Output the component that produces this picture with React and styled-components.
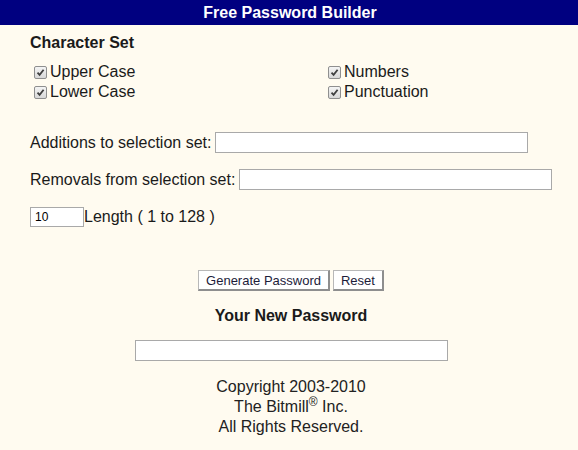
import React from 'react'
import styled, { createGlobalStyle } from 'styled-components'

const GlobalStyle = createGlobalStyle`
  body {
    margin: 0;
    background-color: #fffbf0;
    font-family: "Liberation Sans", Arial, sans-serif;
    color: #1a1a1a;
  }
`

const Header = styled.div`
  height: 25px;
  background-color: #000080;
  color: #fff;
  font-weight: bold;
  font-size: 16px;
  display: flex;
  align-items: center;
  justify-content: center;
  padding-left: 2px;
`

const Body = styled.div`
  padding: 0 0 0 30px;
  font-size: 16px;
`

const SectionTitle = styled.div`
  font-weight: bold;
  margin-top: 8px;
  height: 19px;
  line-height: 19px;
`

const CheckGrid = styled.div`
  display: grid;
  grid-template-columns: 294px 1fr;
  margin-top: 10px;
  padding-left: 4px;
`

const CheckItem = styled.label`
  display: flex;
  align-items: center;
  height: 20px;
`

const Box = styled.span`
  width: 11px;
  height: 11px;
  border: 1px solid #8f8f8f;
  border-radius: 2px;
  background: linear-gradient(#f4f4f4, #d8d8d8);
  display: flex;
  align-items: center;
  justify-content: center;
  margin-right: 3px;
`

const FieldRow = styled.div`
  display: flex;
  align-items: center;
  height: 21px;
  margin-top: ${p => p.top}px;
`

const Label = styled.span`
  margin-right: 4px;
`

const TextBox = styled.input`
  box-sizing: border-box;
  width: ${p => p.w}px;
  height: ${p => p.h || 21}px;
  margin-top: ${p => p.top || 0}px;
  border: 1px solid #a9a9a9;
  background: #fff;
  font-family: "Liberation Sans", Arial, sans-serif;
  font-size: 12px;
  padding: 1px 4px;
  outline: none;
`

const Center = styled.div`
  display: flex;
  flex-direction: column;
  align-items: center;
  padding-left: 4px;
`

const ButtonRow = styled.div`
  display: flex;
  gap: 3px;
  margin-top: 43px;
`

const Button = styled.button`
  height: 21px;
  padding: 0 7px;
  background: #fff;
  border: 1px solid #b8b8b8;
  border-right: 2px solid #8e8e8e;
  border-bottom: 2px solid #8e8e8e;
  font-family: "Liberation Sans", Arial, sans-serif;
  font-size: 13px;
  color: #1c1c3a;
`

const Heading = styled.div`
  font-weight: bold;
  font-size: 16px;
  margin-top: 15px;
  line-height: 19px;
`

const FooterText = styled.div`
  margin-top: 16px;
  text-align: center;
  font-size: 16px;
  line-height: 20px;
  color: #222;

  sup {
    font-size: 12px;
    line-height: 0;
  }
`

const Check = () => (
  <Box>
    <svg width="9" height="9" viewBox="0 0 9 9">
      <path d="M1.5 4.6 L3.6 6.8 L7.6 1.8" fill="none" stroke="#404040" strokeWidth="1.8" />
    </svg>
  </Box>
)

const options = ['Upper Case', 'Numbers', 'Lower Case', 'Punctuation']

const App = () => (
  <>
    <GlobalStyle />
    <Header>Free Password Builder</Header>
    <Body>
      <SectionTitle>Character Set</SectionTitle>
      <CheckGrid>
        {options.map(name => (
          <CheckItem key={name}>
            <Check />
            {name}
          </CheckItem>
        ))}
      </CheckGrid>
      <FieldRow top={30}>
        <Label>Additions to selection set:</Label>
        <TextBox w={313} />
      </FieldRow>
      <FieldRow top={16}>
        <Label>Removals from selection set:</Label>
        <TextBox w={313} />
      </FieldRow>
      <FieldRow top={16}>
        <TextBox w={54} h={20} defaultValue="10" />
        Length ( 1 to 128 )
      </FieldRow>
    </Body>
    <Center>
      <ButtonRow>
        <Button>Generate Password</Button>
        <Button>Reset</Button>
      </ButtonRow>
      <Heading>Your New Password</Heading>
      <TextBox w={313} h={21} top={15} />
      <FooterText>
        Copyright 2003-2010<br />
        The Bitmill<sup>®</sup> Inc.<br />
        All Rights Reserved.
      </FooterText>
    </Center>
  </>
)

export default App
